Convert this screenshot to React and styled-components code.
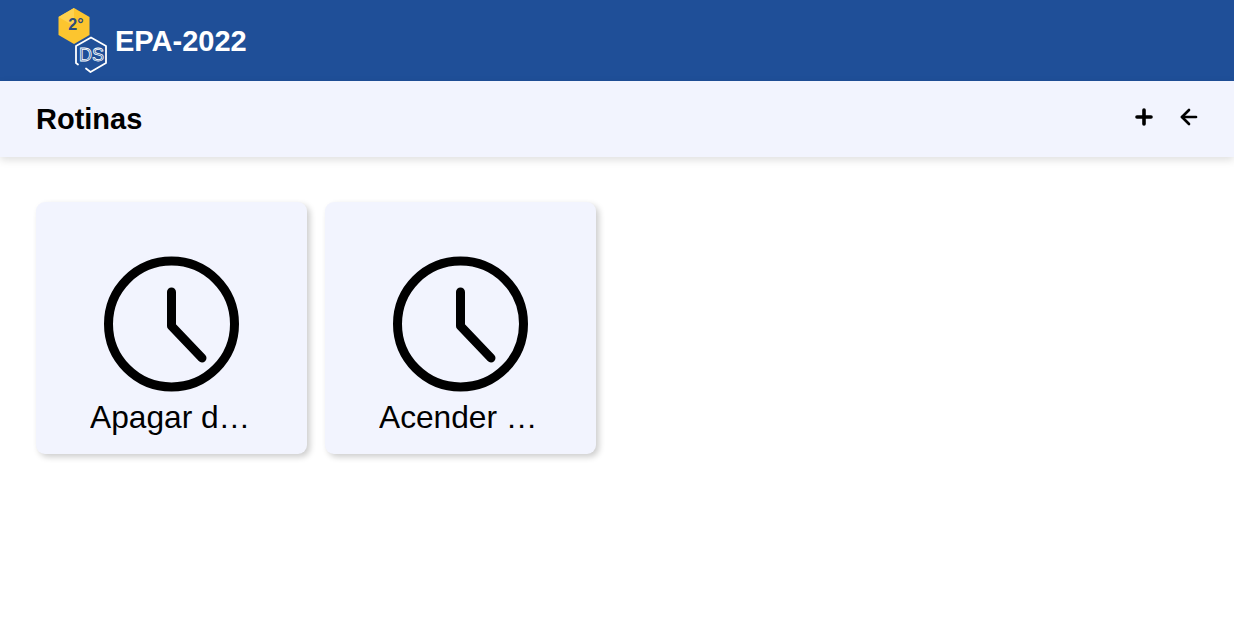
import React from "react";
import styled, { createGlobalStyle } from "styled-components";
import { Plus, ArrowLeft } from "lucide-react";

const GlobalStyle = createGlobalStyle`
    html, body {
        margin: 0;
        padding: 0;
        background-color: #fff;
        font-family: "Liberation Sans", Arial, sans-serif;
    }
`

const Header = styled.header`
    height: 81px;
    background-color: #1f4f98;
    display: flex;
    align-items: center;
    padding-left: 56px;
    gap: 7px;
`

const Brand = styled.span`
    color: #fff;
    font-size: 29px;
    font-weight: 700;
    line-height: 1;
    padding-top: 1px;
`

const SubHeader = styled.div`
    height: 76px;
    background-color: #f2f4fe;
    box-shadow: 0 3px 8px rgba(0, 0, 0, 0.13);
    display: flex;
    align-items: center;
    justify-content: space-between;
    padding: 0 32px 0 36px;
`

const Title = styled.h1`
    margin: 0;
    font-size: 29px;
    font-weight: 700;
    color: #000;
`

const Actions = styled.div`
    display: flex;
    align-items: center;
    gap: 18px;
    margin-top: -5px;
`

const IconButton = styled.button`
    width: 27px;
    height: 27px;
    padding: 0;
    border: 0;
    background: none;
    color: #000;
    display: flex;
    align-items: center;
    justify-content: center;
`

const Grid = styled.main`
    display: flex;
    gap: 18px;
    padding: 45px 36px;
`

const Card = styled.div`
    width: 271px;
    height: 252px;
    box-sizing: border-box;
    padding-top: 54px;
    background-color: #f2f4fe;
    border-radius: 9px;
    box-shadow: 3px 3px 6px rgba(0, 0, 0, 0.2);
    display: flex;
    flex-direction: column;
    align-items: center;
`

const CardLabel = styled.span`
    width: 163px;
    margin-top: 6px;
    font-size: 31.7px;
    line-height: 38px;
    color: #000;
    white-space: nowrap;
    overflow: hidden;
    text-overflow: ellipsis;
`

const Logo = () => (
    <svg width="52" height="68" viewBox="0 0 52 68">
        <polygon points="18,1 33.5,10 33.5,28 18,37 2.5,28 2.5,10" fill="#fcc52f" />
        <polygon points="2.5,10 18,1 18,19" fill="#fdd24f" />
        <text x="20" y="23" fontFamily="Liberation Sans" fontSize="16" fontWeight="700" textAnchor="middle" fill="#2c4b7c">2°</text>
        <path d="M30 61.5 L34.5 65 L50 56 V39 L35 30.5 L20 39 V56 L22 57.5" fill="none" stroke="#fff" strokeWidth="1.8" strokeLinejoin="round" strokeLinecap="round" />
        <text x="35.5" y="54" fontFamily="Liberation Sans" fontSize="18" textAnchor="middle" fill="none" stroke="#fff" strokeWidth="0.8">DS</text>
    </svg>
)

const ClockIcon = () => (
    <svg width="136" height="136" viewBox="0 0 136 136" fill="none" stroke="#000" strokeWidth="9" strokeLinecap="round" strokeLinejoin="round">
        <circle cx="67.5" cy="68" r="63" />
        <path d="M67.5 36 V70 L98 102" />
    </svg>
)

const routines = ["Apagar dispositivos", "Acender dispositivos"];

export default function App() {
    return (
        <>
            <GlobalStyle />
            <Header>
                <Logo />
                <Brand>EPA-2022</Brand>
            </Header>
            <SubHeader>
                <Title>Rotinas</Title>
                <Actions>
                    <IconButton><Plus size={24} strokeWidth={3.6} /></IconButton>
                    <IconButton><ArrowLeft size={24} strokeWidth={2.7} /></IconButton>
                </Actions>
            </SubHeader>
            <Grid>
                {routines.map((name) => (
                    <Card key={name}>
                        <ClockIcon />
                        <CardLabel>{name}</CardLabel>
                    </Card>
                ))}
            </Grid>
        </>
    );
}
